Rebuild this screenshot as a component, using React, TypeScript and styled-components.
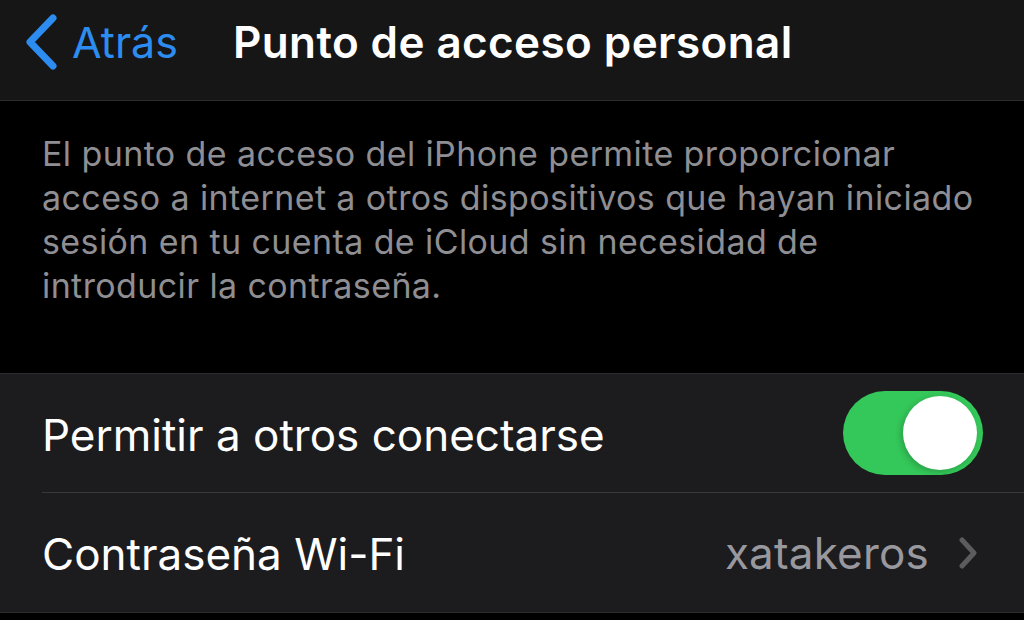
import React from "react";
import styled, { createGlobalStyle } from "styled-components";

const Global = createGlobalStyle`
  html, body { margin: 0; padding: 0; background: #000; }
  body { font-family: Inter, "Noto Sans", sans-serif; -webkit-font-smoothing: antialiased; }
`;

const Screen = styled.div`
  width: 1024px;
  height: 620px;
  overflow: hidden;
  background: #000;
  display: flex;
  flex-direction: column;
`;

const NavBar = styled.header`
  height: 101px;
  flex: none;
  background: #161616;
  border-bottom: 1px solid #2c2c2e;
  display: flex;
  align-items: center;
  padding: 0 0 17px 25px;
  box-sizing: border-box;
`;

const BackButton = styled.div`
  display: flex;
  align-items: center;
  gap: 15px;
  color: #2d8cf0;
  font-size: 43px;
  width: 208px;
  flex: none;
`;

const Title = styled.h1`
  margin: 0;
  color: #fff;
  font-size: 44px;
  font-weight: 600;
  letter-spacing: 0.4px;
`;

const Footer = styled.p`
  margin: 0;
  padding: 31px 20px 0 42px;
  height: 272px;
  box-sizing: border-box;
  flex: none;
  color: #8e8e93;
  font-size: 34px;
  line-height: 44px;
  letter-spacing: 0.4px;
  white-space: nowrap;
`;

const Group = styled.section`
  background: #1c1c1e;
  border-top: 1px solid #2c2c2e;
  border-bottom: 1px solid #2c2c2e;
  flex: none;
`;

const Row = styled.div<{ $last?: boolean }>`
  height: 119px;
  box-sizing: border-box;
  margin-left: 42px;
  padding-right: 41px;
  display: flex;
  align-items: center;
  justify-content: space-between;
  border-bottom: ${(p) => (p.$last ? "none" : "1px solid #38383a")};
`;

const Label = styled.span`
  color: #fff;
  font-size: 44px;
  padding-top: 3px;
`;

const Value = styled.span`
  display: flex;
  align-items: center;
  gap: 30px;
  padding-right: 6px;
  color: #98989e;
  font-size: 44px;
  letter-spacing: 0.2px;
`;

const Toggle = styled.div`
  width: 140px;
  height: 84px;
  border-radius: 42px;
  background: #34c759;
  position: relative;
  flex: none;
  &::after {
    content: "";
    position: absolute;
    right: 6px;
    top: 5px;
    width: 74px;
    height: 74px;
    border-radius: 50%;
    background: #fff;
    box-shadow: -2px 2px 6px rgba(0, 0, 0, 0.2);
  }
`;

export default function App() {
  return (
    <Screen>
      <Global />
      <NavBar>
        <BackButton>
          <svg width="32" height="56" viewBox="0 0 32 56">
            <path d="M28 4 L5 28 L28 52" fill="none" stroke="#2d8cf0" strokeWidth="7" strokeLinecap="round" strokeLinejoin="round" />
          </svg>
          Atrás
        </BackButton>
        <Title>Punto de acceso personal</Title>
      </NavBar>
      <Footer>
        El punto de acceso del iPhone permite proporcionar
        <br />
        acceso a internet a otros dispositivos que hayan iniciado
        <br />
        sesión en tu cuenta de iCloud sin necesidad de
        <br />
        introducir la contraseña.
      </Footer>
      <Group>
        <Row>
          <Label>Permitir a otros conectarse</Label>
          <Toggle />
        </Row>
        <Row $last>
          <Label>Contraseña Wi-Fi</Label>
          <Value>
            xatakeros
            <svg width="18" height="32" viewBox="0 0 18 32">
              <path d="M3 3 L15 16 L3 29" fill="none" stroke="#5b5b60" strokeWidth="5" strokeLinecap="round" strokeLinejoin="round" />
            </svg>
          </Value>
        </Row>
      </Group>
    </Screen>
  );
}
